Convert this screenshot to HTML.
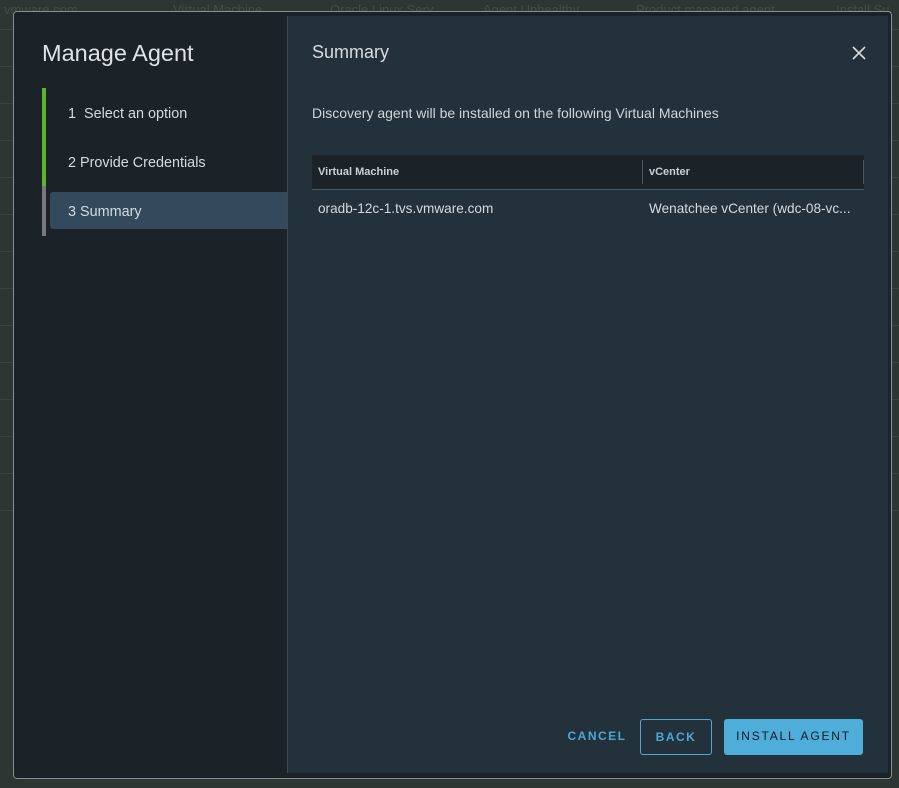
<!DOCTYPE html>
<html><head><meta charset="utf-8"><style>
*{margin:0;padding:0;box-sizing:border-box}
body{width:899px;height:788px;overflow:hidden;background:#2e3634;font-family:"Liberation Sans",sans-serif;position:relative}
.bg{position:absolute;color:#444d4b;font-size:13px}
.row{position:absolute;left:0;width:899px;height:1px;background:#3a4341}
.modal{position:absolute;left:13px;top:11px;width:879px;height:768px;border:1px solid #8a8f8f;border-radius:4px;background:#1b2329;overflow:hidden}
.left{position:absolute;left:0;top:0;width:273px;height:100%;background:#1b2329}
.right{position:absolute;left:273px;top:4px;width:601px;height:757px;background:#23313a;border-left:1px solid #3d4a52}
h1{position:absolute;left:28px;top:28px;font-weight:normal;font-size:23.5px;color:#dfe3e6}
.bar{position:absolute;left:28px;width:4px}
.step{position:absolute;left:36px;width:237px;height:37px;line-height:37px;padding-left:18px;font-size:14.4px;color:#d6dadd}
.step.act{background:#324a5c;border-radius:3px 0 0 3px}
h2{position:absolute;left:24px;top:26px;font-weight:normal;font-size:18px;color:#d6dce0}
.x{position:absolute;right:22px;top:30px}
.desc{position:absolute;left:24px;top:89px;font-size:14px;color:#cfd5d9}
.th{position:absolute;left:24px;top:139px;width:552px;height:35px;background:#1b2329;border-bottom:1px solid #4a5a64}
.th span{position:absolute;top:11px;font-size:11px;font-weight:bold;color:#c9d0d4}
.sep{position:absolute;top:5px;width:1px;height:24px;background:#4a5a64}
.td{position:absolute;top:185px;font-size:13.6px;color:#d3d9dc}
.btn{position:absolute;top:703px;height:36px;line-height:35px;font-size:12px;font-weight:bold;letter-spacing:1.5px;border-radius:3px;text-align:center}
</style></head><body>
<div class="bg" style="left:4px;top:2px">vmware.com</div>
<div class="bg" style="left:173px;top:2px">Virtual Machine</div>
<div class="bg" style="left:330px;top:2px">Oracle Linux Serv</div>
<div class="bg" style="left:483px;top:2px">Agent Unhealthy</div>
<div class="bg" style="left:636px;top:2px">Product managed agent</div>
<div class="bg" style="left:836px;top:2px">Install Su</div>
<div class="row" style="top:29px"></div><div class="row" style="top:66px"></div><div class="row" style="top:103px"></div><div class="row" style="top:140px"></div><div class="row" style="top:177px"></div><div class="row" style="top:214px"></div><div class="row" style="top:251px"></div><div class="row" style="top:288px"></div><div class="row" style="top:325px"></div><div class="row" style="top:362px"></div><div class="row" style="top:399px"></div><div class="row" style="top:436px"></div><div class="row" style="top:473px"></div><div class="row" style="top:510px"></div>
<div class="modal">
<div class="left">
<h1>Manage Agent</h1>
<div class="bar" style="top:76px;height:98px;background:#5bb52f"></div>
<div class="bar" style="top:174px;height:50px;background:#77787c"></div>
<div class="step" style="top:84px">1&nbsp; Select an option</div>
<div class="step" style="top:133px">2 Provide Credentials</div>
<div class="step act" style="top:180px;line-height:41px">3 Summary</div>
</div>
<div class="right">
<h2>Summary</h2>
<svg class="x" width="14" height="14" viewBox="0 0 14 14"><path d="M1 1L13 13M13 1L1 13" stroke="#d6dce0" stroke-width="1.6"/></svg>
<div class="desc">Discovery agent will be installed on the following Virtual Machines</div>
<div class="th"><span style="left:6px">Virtual Machine</span><div class="sep" style="left:330px"></div><span style="left:337px">vCenter</span><div class="sep" style="left:551px"></div></div>
<div class="td" style="left:30px">oradb-12c-1.tvs.vmware.com</div>
<div class="td" style="left:361px">Wenatchee vCenter (wdc-08-vc...</div>
<div class="btn" style="left:274px;width:70px;color:#4aa9d8">CANCEL</div>
<div class="btn" style="left:352px;width:72px;border:1px solid #4aa9d8;color:#4aa9d8">BACK</div>
<div class="btn" style="left:436px;width:139px;background:#4fadd9;color:#0f1b22;font-weight:normal;letter-spacing:1.8px">INSTALL AGENT</div>
</div>
</div>
</body></html>
